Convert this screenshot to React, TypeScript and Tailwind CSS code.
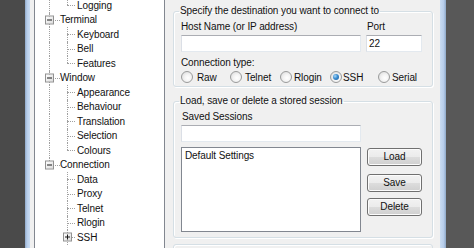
import React from "react";

type ColA = "line" | "expFull" | "expTop" | "none";
type ColB = "tee" | "ell" | "teeExp";

interface Item {
  label: string;
  a: ColA;
  b?: ColB;
  sign?: "-" | "+";
}

const items: Item[] = [
  { label: "Logging", a: "line", b: "ell" },
  { label: "Terminal", a: "expFull", sign: "-" },
  { label: "Keyboard", a: "line", b: "tee" },
  { label: "Bell", a: "line", b: "tee" },
  { label: "Features", a: "line", b: "ell" },
  { label: "Window", a: "expFull", sign: "-" },
  { label: "Appearance", a: "line", b: "tee" },
  { label: "Behaviour", a: "line", b: "tee" },
  { label: "Translation", a: "line", b: "tee" },
  { label: "Selection", a: "line", b: "tee" },
  { label: "Colours", a: "line", b: "ell" },
  { label: "Connection", a: "expTop", sign: "-" },
  { label: "Data", a: "none", b: "tee" },
  { label: "Proxy", a: "none", b: "tee" },
  { label: "Telnet", a: "none", b: "tee" },
  { label: "Rlogin", a: "none", b: "tee" },
  { label: "SSH", a: "none", b: "teeExp", sign: "+" },
];

function Expander({ sign, left }: { sign: "-" | "+"; left: string }) {
  return (
    <span
      className={`absolute ${left} top-1/2 -translate-y-1/2 w-[9px] h-[9px] border border-[#919191] bg-gradient-to-br from-white to-[#dcdcdc] flex items-center justify-center`}
    >
      <span className="absolute w-[5px] h-px bg-[#1a1a1a]" />
      {sign === "+" && <span className="absolute w-px h-[5px] bg-[#1a1a1a]" />}
    </span>
  );
}

function TreeRow({ item }: { item: Item }) {
  return (
    <div className="flex items-center h-[14.5px]">
      <div className="relative w-[16px] h-full shrink-0">
        {item.a === "line" && (
          <span className="absolute left-[8px] top-0 bottom-0 border-l border-dotted border-[#a0a0a0]" />
        )}
        {item.a === "expFull" && (
          <>
            <span className="absolute left-[8px] top-0 bottom-0 border-l border-dotted border-[#a0a0a0]" />
            <span className="absolute left-[12px] right-[-3px] top-1/2 border-t border-dotted border-[#a0a0a0]" />
            <Expander sign={item.sign!} left="left-[4px]" />
          </>
        )}
        {item.a === "expTop" && (
          <>
            <span className="absolute left-[8px] top-0 h-1/2 border-l border-dotted border-[#a0a0a0]" />
            <span className="absolute left-[12px] right-[-3px] top-1/2 border-t border-dotted border-[#a0a0a0]" />
            <Expander sign={item.sign!} left="left-[4px]" />
          </>
        )}
      </div>
      {item.b ? (
        <>
          <div className="relative w-[18px] h-full shrink-0">
            {(item.b === "tee" || item.b === "teeExp") && (
              <span className="absolute left-[10px] top-0 bottom-0 border-l border-dotted border-[#a0a0a0]" />
            )}
            {item.b === "ell" && (
              <span className="absolute left-[10px] top-0 h-1/2 border-l border-dotted border-[#a0a0a0]" />
            )}
            <span className="absolute left-[10px] right-0 top-1/2 border-t border-dotted border-[#a0a0a0]" />
            {item.b === "teeExp" && <Expander sign="+" left="left-[6px]" />}
          </div>
          <span className="ml-[2px] whitespace-nowrap">{item.label}</span>
        </>
      ) : (
        <span className="ml-[3px] whitespace-nowrap">{item.label}</span>
      )}
    </div>
  );
}

function Radio({ checked }: { checked?: boolean }) {
  return (
    <span className="relative w-[12px] h-[12px] rounded-full border border-[#9a9b9b] bg-[radial-gradient(circle_at_60%_60%,#ffffff_0%,#f4f4f4_40%,#d6d6d6_100%)] flex items-center justify-center shrink-0">
      {checked && (
        <span className="w-[6px] h-[6px] rounded-full bg-[radial-gradient(circle_at_35%_35%,#a8d8f8_0%,#3a8cd0_45%,#1c5a96_100%)]" />
      )}
    </span>
  );
}

function Button({ label }: { label: string }) {
  return (
    <div className="w-[55px] h-[18px] rounded-[3px] border border-[#707070] bg-[linear-gradient(#f2f2f2_0%,#ebebeb_50%,#dddddd_50%,#cfcfcf_100%)] shadow-[inset_0_0_0_1px_#fcfcfc] flex items-center justify-center leading-none">
      {label}
    </div>
  );
}

const inputBorder =
  "border border-t-[#abadb3] border-l-[#dbdfe6] border-r-[#e3e9ef] border-b-[#e3e9ef]";

export default function App() {
  return (
    <div className="w-[474px] h-[248px] overflow-hidden flex bg-[#4d4d4d] text-[10px] tracking-[-0.1px] text-[#111] font-['Liberation_Sans',Arial,sans-serif]">
      <div className="w-[25px] h-full bg-[#4a4a4a]" />
      <div className="w-[5px] h-full bg-[linear-gradient(90deg,#8ea8c8_0%,#b7cdea_40%,#c9dcf2_100%)]" />
      <div className="w-[410px] h-full bg-[#f0f0f0] flex pl-[4px]">
        {/* Tree */}
        <div className="w-[131px] h-full bg-white border-l border-r border-[#828790] overflow-hidden">
          <div className="-mt-[2px] pl-[6px]">
            {items.map((it) => (
              <TreeRow key={it.label} item={it} />
            ))}
          </div>
        </div>
        {/* Right */}
        <div className="flex-1 pt-[4px] pl-[8px] pr-[7px]">
          <fieldset className="border border-[#d5dfe5] rounded-[3px] px-[7px] pb-[2px] shadow-[inset_1px_1px_0_#ffffff,1px_1px_0_#ffffff]">
            <legend className="px-[1px] -ml-[2px] leading-[14px]">
              Specify the destination you want to connect to
            </legend>
            <div className="flex mt-[2px] leading-[14px]">
              <div className="w-[185px]">Host Name (or IP address)</div>
              <div className="pl-[1px]">Port</div>
            </div>
            <div className="flex mt-[1px] gap-[5px]">
              <div className={`w-[180px] h-[17px] bg-white ${inputBorder}`} />
              <div className={`w-[56px] h-[17px] bg-white ${inputBorder} pl-[2px] flex items-center`}>
                22
              </div>
            </div>
            <div className="mt-[4px] leading-[14px]">Connection type:</div>
            <div className="flex h-[14px] items-center">
              <div className="w-[49px] flex items-center gap-[4px]">
                <Radio />
                <span>Raw</span>
              </div>
              <div className="w-[50px] flex items-center gap-[3px]">
                <Radio />
                <span>Telnet</span>
              </div>
              <div className="w-[50px] flex items-center gap-[2px]">
                <Radio />
                <span>Rlogin</span>
              </div>
              <div className="w-[48px] flex items-center gap-[1px]">
                <Radio checked />
                <span>SSH</span>
              </div>
              <div className="flex items-center gap-[2px]">
                <Radio />
                <span>Serial</span>
              </div>
            </div>
          </fieldset>

          <fieldset className="mt-[7px] border border-[#d5dfe5] rounded-[3px] px-[7px] pb-[5px] shadow-[inset_1px_1px_0_#ffffff,1px_1px_0_#ffffff]">
            <legend className="px-[1px] -ml-[2px] leading-[14px]">
              Load, save or delete a stored session
            </legend>
            <div className="mt-[2px] pl-[1px] leading-[14px]">Saved Sessions</div>
            <div className={`mt-[1px] w-[180px] h-[17px] bg-white ${inputBorder}`} />
            <div className="flex mt-[5px]">
              <div className="w-[180px] h-[85px] bg-white border border-[#828790] pl-[3px] pt-[1px] leading-[14px]">
                Default Settings
              </div>
              <div className="ml-[6px] pt-[1px] flex flex-col">
                <Button label="Load" />
                <div className="mt-[8px]">
                  <Button label="Save" />
                </div>
                <div className="mt-[6px]">
                  <Button label="Delete" />
                </div>
              </div>
            </div>
          </fieldset>

          <div className="mt-[6px] h-[20px] border border-[#d5dfe5] rounded-t-[3px] shadow-[inset_1px_1px_0_#ffffff]" />
        </div>
      </div>
      <div className="w-[6px] h-full bg-[linear-gradient(90deg,#c9dcf2_0%,#b7cdea_60%,#8ea8c8_100%)]" />
      <div className="flex-1 h-full bg-[#585858]" />
    </div>
  );
}
